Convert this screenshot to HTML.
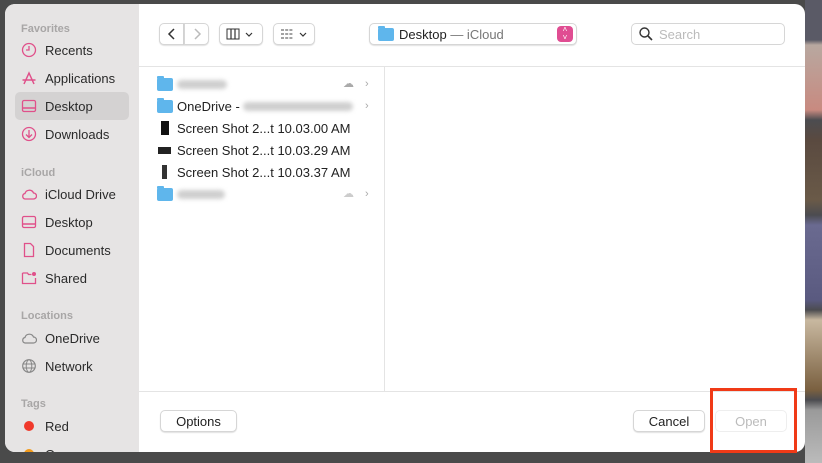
<!DOCTYPE html>
<html><head><meta charset="utf-8"><style>
*{box-sizing:border-box;margin:0;padding:0}
body{width:822px;height:463px;overflow:hidden;background:#4a4a4a;font-family:"Liberation Sans",sans-serif;position:relative}
.bgstrip{position:absolute;left:805px;top:0;width:17px;height:463px;background:linear-gradient(#5a5a66 0,#5a5a66 40px,#b8a8a0 45px,#c88a80 110px,#4c4c50 120px,#5a4a40 140px,#6a5a48 200px,#4c4c50 215px,#6a6a90 225px,#5a5a80 300px,#4c4c50 310px,#c8b8a0 320px,#7a6040 390px,#4c4c50 400px,#9a9a9a 410px,#bbb 463px)}
.dlg{position:absolute;left:5px;top:4px;width:800px;height:448px;background:#fff;border-radius:10px;overflow:hidden}
.side{position:absolute;left:0;top:0;width:134px;height:448px;background:#e6e4e4}
.hdr{position:absolute;left:16px;font-size:11px;color:#a8a6a6;font-weight:bold}
.it{position:absolute;left:16px;font-size:13px;color:#2a2a2a;display:flex;align-items:center;height:20px}
.it svg{width:16px;height:16px;margin-right:8px}
.sel{position:absolute;left:10px;top:88px;width:114px;height:28px;background:#d4d2d2;border-radius:5px}
.btn{position:absolute;height:22px;border:1px solid #d6d6d6;border-radius:5px;background:#fff;box-shadow:0 1px 1px rgba(0,0,0,.12);font-size:13px;display:flex;align-items:center;justify-content:center;color:#222}
.row{position:absolute;left:152px;font-size:13px;color:#222;display:flex;align-items:center;height:18px}
.blur{display:inline-block;height:9px;background:#cfcfcf;border-radius:5px;filter:blur(2px)}
.fold{width:16px;height:13px;background:#5fb6ec;border-radius:2px;margin-right:4px;position:relative}
.fold:before{content:"";position:absolute;left:0;top:-2px;width:7px;height:3px;background:#5fb6ec;border-radius:1px}
.chev{position:absolute;left:358px;color:#aaa;font-size:11px}
</style></head><body>
<div class="bgstrip"></div>
<div class="dlg">
 <div class="side">
  <div class="hdr" style="top:19px">Favorites</div>
  <div class="sel"></div>
  <div class="it" style="top:36px"><svg viewBox="0 0 16 16"><circle cx="8" cy="8" r="6.5" fill="none" stroke="#e0508a" stroke-width="1.3"/><path d="M8 4v4H5" fill="none" stroke="#e0508a" stroke-width="1.3"/></svg>Recents</div>
  <div class="it" style="top:64px"><svg viewBox="0 0 16 16"><path d="M3 14L8 3l5 11M1.5 10h13" fill="none" stroke="#e0508a" stroke-width="1.5"/></svg>Applications</div>
  <div class="it" style="top:92px"><svg viewBox="0 0 16 16"><rect x="1.5" y="2.5" width="13" height="11" rx="1.5" fill="none" stroke="#e0508a" stroke-width="1.3"/><path d="M2 10h12" stroke="#e0508a" stroke-width="1.5"/></svg>Desktop</div>
  <div class="it" style="top:120px"><svg viewBox="0 0 16 16"><circle cx="8" cy="8" r="6.5" fill="none" stroke="#e0508a" stroke-width="1.3"/><path d="M8 4v7M5 8.5l3 3 3-3" fill="none" stroke="#e0508a" stroke-width="1.3"/></svg>Downloads</div>
  <div class="hdr" style="top:163px">iCloud</div>
  <div class="it" style="top:180px"><svg viewBox="0 0 16 16"><path d="M4 13h8.5a3 3 0 0 0 0-6A4.5 4.5 0 0 0 4 7.5a2.8 2.8 0 0 0 0 5.5z" fill="none" stroke="#e0508a" stroke-width="1.3"/></svg>iCloud Drive</div>
  <div class="it" style="top:208px"><svg viewBox="0 0 16 16"><rect x="1.5" y="2.5" width="13" height="11" rx="1.5" fill="none" stroke="#e0508a" stroke-width="1.3"/><path d="M2 10h12" stroke="#e0508a" stroke-width="1.5"/></svg>Desktop</div>
  <div class="it" style="top:236px"><svg viewBox="0 0 16 16"><path d="M3.5 1.5h6l3 3v10h-9z" fill="none" stroke="#e0508a" stroke-width="1.3"/></svg>Documents</div>
  <div class="it" style="top:264px"><svg viewBox="0 0 16 16"><path d="M1.5 3h5l1 1.5h3M1.5 3v10.5h13V8" fill="none" stroke="#e0508a" stroke-width="1.3"/><circle cx="13" cy="4" r="2" fill="#e0508a"/></svg>Shared</div>
  <div class="hdr" style="top:306px">Locations</div>
  <div class="it" style="top:324px"><svg viewBox="0 0 16 16"><path d="M4 13h8.5a3 3 0 0 0 0-6A4.5 4.5 0 0 0 4 7.5a2.8 2.8 0 0 0 0 5.5z" fill="none" stroke="#888" stroke-width="1.2"/></svg>OneDrive</div>
  <div class="it" style="top:352px"><svg viewBox="0 0 16 16"><circle cx="8" cy="8" r="6.3" fill="none" stroke="#888" stroke-width="1.2"/><ellipse cx="8" cy="8" rx="2.8" ry="6.3" fill="none" stroke="#888"/><path d="M2 6h12M2 10h12" stroke="#888"/></svg>Network</div>
  <div class="hdr" style="top:394px">Tags</div>
  <div class="it" style="top:412px"><svg viewBox="0 0 16 16"><circle cx="8" cy="8" r="5" fill="#f0392b"/></svg>Red</div>
  <div class="it" style="top:440px"><svg viewBox="0 0 16 16"><circle cx="8" cy="8" r="5" fill="#f29a1a"/></svg>Orange</div>
 </div>
 <div class="btn" style="left:154px;top:19px;width:25px;border-radius:5px 0 0 5px"><svg width="10" height="12" viewBox="0 0 10 12"><path d="M7 1L2 6l5 5" fill="none" stroke="#333" stroke-width="1.5"/></svg></div>
 <div class="btn" style="left:179px;top:19px;width:25px;border-radius:0 5px 5px 0"><svg width="10" height="12" viewBox="0 0 10 12"><path d="M3 1l5 5-5 5" fill="none" stroke="#bbb" stroke-width="1.5"/></svg></div>
 <div class="btn" style="left:214px;top:19px;width:44px"><svg width="30" height="12" viewBox="0 0 30 12"><rect x="1" y="1" width="12" height="10" fill="none" stroke="#333"/><path d="M5 1v10M9 1v10M20 5l3 3 3-3" fill="none" stroke="#333" stroke-width="1.2"/></svg></div>
 <div class="btn" style="left:268px;top:19px;width:42px"><svg width="30" height="12" viewBox="0 0 30 12"><path d="M2 2h12M2 6h12M2 10h12" stroke="#444" stroke-dasharray="3 1.2"/><path d="M21 5l3 3 3-3" fill="none" stroke="#333" stroke-width="1.2"/></svg></div>
 <div class="btn" style="left:364px;top:19px;width:208px;justify-content:flex-start;padding-left:8px"><div class="fold" style="margin-right:5px"></div>Desktop<span style="color:#777">&nbsp;— iCloud</span><div style="position:absolute;right:3px;top:2px;width:16px;height:16px;background:#e04d92;border-radius:4px;color:#fff;font-size:8px;line-height:8px;text-align:center">˄<br>˅</div></div>
 <div class="btn" style="left:626px;top:19px;width:154px;justify-content:flex-start;padding-left:6px;color:#bbb;box-shadow:none"><svg width="16" height="16" viewBox="0 0 16 16" style="margin-right:5px"><circle cx="6.5" cy="6.5" r="4.5" fill="none" stroke="#333" stroke-width="1.4"/><path d="M10 10l4 4" stroke="#333" stroke-width="1.6"/></svg>Search</div>
 <div style="position:absolute;left:134px;top:62px;width:666px;height:1px;background:#e4e4e4"></div>
 <div style="position:absolute;left:379px;top:63px;width:1px;height:324px;background:#e4e4e4"></div>
 <div style="position:absolute;left:134px;top:387px;width:666px;height:1px;background:#e4e4e4"></div>
 <div class="row" style="top:71px"><div class="fold"></div><span class="blur" style="width:50px"></span></div>
 <div class="row" style="top:93px"><div class="fold"></div>OneDrive -&nbsp;<span class="blur" style="width:110px"></span></div>
 <div class="row" style="top:115px"><span style="display:inline-block;width:8px;height:14px;background:#111;margin:0 8px 0 4px"></span>Screen Shot 2...t 10.03.00 AM</div>
 <div class="row" style="top:137px"><span style="display:inline-block;width:13px;height:7px;background:#222;margin:0 6px 0 1px"></span>Screen Shot 2...t 10.03.29 AM</div>
 <div class="row" style="top:159px"><span style="display:inline-block;width:5px;height:14px;background:#333;margin:0 10px 0 5px"></span>Screen Shot 2...t 10.03.37 AM</div>
 <div class="row" style="top:181px"><div class="fold"></div><span class="blur" style="width:48px"></span></div>
 <div class="chev" style="top:73px;left:338px;color:#aaa">☁</div>
 <div class="chev" style="top:74px;left:360px">›</div>
 <div class="chev" style="top:96px;left:360px">›</div>
 <div class="chev" style="top:183px;left:338px;color:#ccc">☁</div>
 <div class="chev" style="top:184px;left:360px">›</div>
 <div class="btn" style="left:155px;top:406px;width:77px">Options</div>
 <div class="btn" style="left:628px;top:406px;width:72px">Cancel</div>
 <div class="btn" style="left:710px;top:406px;width:72px;color:#bbb;box-shadow:none;border-color:#eee">Open</div>
</div>
<div style="position:absolute;left:710px;top:388px;width:87px;height:65px;border:3.5px solid #f03a17"></div>
</body></html>
